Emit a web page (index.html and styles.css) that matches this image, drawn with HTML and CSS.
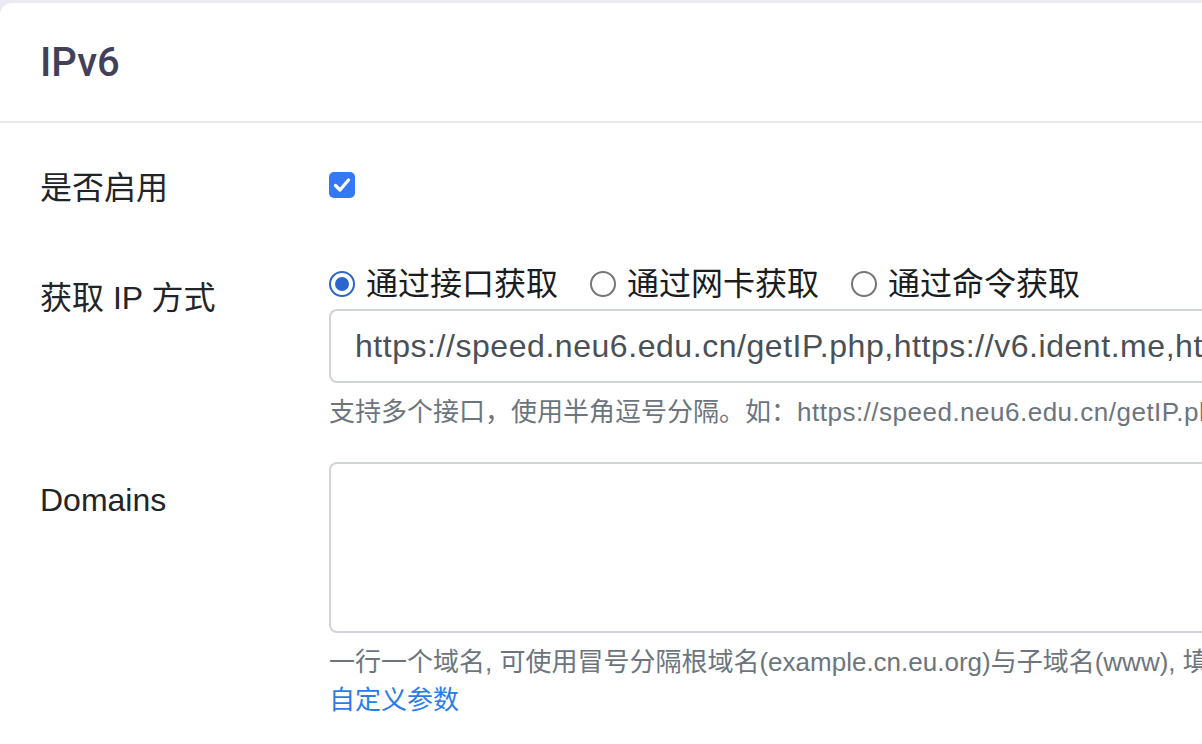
FILE: index.html
```html
<!DOCTYPE html>
<html lang="zh-CN">
<head>
<meta charset="utf-8">
<title>IPv6</title>
<link rel="stylesheet" href="styles.css">
</head>
<body>
<div class="page">
  <div class="card">
    <div class="card-header">IPv6</div>
    <div class="card-body">
      <div class="form-row row-enable">
        <div class="label">是否启用</div>
        <div class="control control-check">
          <span class="checkbox">
            <svg viewBox="0 0 26 26" width="26" height="26"><path d="M6.5 13.5 L11 18 L19.5 8" fill="none" stroke="#fff" stroke-width="3.2" stroke-linecap="round" stroke-linejoin="round"/></svg>
          </span>
        </div>
      </div>
      <div class="form-row row-ip">
        <div class="label label-pad">获取 IP 方式</div>
        <div class="control">
          <div class="radios">
            <label class="radio-opt"><span class="radio checked"></span><span class="radio-text">通过接口获取</span></label>
            <label class="radio-opt"><span class="radio"></span><span class="radio-text">通过网卡获取</span></label>
            <label class="radio-opt"><span class="radio"></span><span class="radio-text">通过命令获取</span></label>
          </div>
          <div class="input">https://speed.neu6.edu.cn/getIP.php,https://v6.ident.me,https://6.ipw.cn</div>
          <div class="form-text">支持多个接口，使用半角逗号分隔。如：<span class="latin">https://speed.neu6.edu.cn/getIP.php,https://v6.ident.me</span></div>
        </div>
      </div>
      <div class="form-row row-domains">
        <div class="label label-pad">Domains</div>
        <div class="control">
          <div class="textarea"></div>
          <div class="form-text">一行一个域名, 可使用冒号分隔根域名(example.cn.eu.org)与子域名(www), 填写示例</div>
          <a class="link">自定义参数</a>
        </div>
      </div>
    </div>
  </div>
</div>
</body>
</html>
```
FILE: styles.css
```css
html, body {
  margin: 0;
  padding: 0;
  overflow: hidden;
  background: #ecebf1;
}
body {
  font-family: "Liberation Sans", "Noto Sans CJK SC", sans-serif;
  color: #212529;
}
.page {
  padding-top: 3px;
  width: 1500px;
}
.card {
  background: #fff;
  border-top-left-radius: 12px;
  height: 800px;
}
.card-header {
  height: 120px;
  box-sizing: border-box;
  padding: 36px 40px;
  font-family: Roboto, "Liberation Sans", sans-serif;
  font-size: 40px;
  line-height: 48px;
  font-weight: 500;
  color: #43415a;
  border-bottom: 2px solid #e9e8ee;
}
.card-body {
  padding: 27px 0 0 40px;
}
.form-row {
  display: grid;
  grid-template-columns: 289px 1fr;
}
.row-enable { margin-bottom: 34px; }
.row-ip { margin-bottom: 31px; }
.label {
  font-size: 32px;
  line-height: 48px;
  padding-top: 14px;
  padding-bottom: 14px;
  color: #212529;
}
.control-check {
  padding-top: 22px;
}
.checkbox {
  display: flex;
  align-items: center;
  justify-content: center;
  width: 26px;
  height: 26px;
  border-radius: 5px;
  background: #3478f6;
}
.radios {
  display: flex;
  align-items: center;
  height: 48px;
  gap: 32px;
}
.radio-opt {
  display: flex;
  align-items: center;
  gap: 11px;
}
.radio {
  width: 26px;
  height: 26px;
  box-sizing: border-box;
  border-radius: 50%;
  border: 2px solid #767676;
  position: relative;
}
.radio.checked {
  border: 2.5px solid #2a66cc;
}
.radio.checked::after {
  content: "";
  position: absolute;
  left: 3.5px;
  top: 3.5px;
  width: 14px;
  height: 14px;
  border-radius: 50%;
  background: #2a66cc;
}
.radio-text {
  font-size: 32px;
  line-height: 48px;
  color: #1a1c1f;
}
.input {
  margin-top: 1px;
  height: 74px;
  box-sizing: border-box;
  border: 2px solid #d0d4d9;
  border-right: none;
  border-radius: 8px 0 0 8px;
  padding: 0 0 0 24px;
  font-size: 32px;
  line-height: 70px;
  letter-spacing: 0.55px;
  color: #495057;
  white-space: nowrap;
  overflow: hidden;
}
.textarea {
  height: 171px;
  box-sizing: border-box;
  border: 2px solid #d0d4d9;
  border-right: none;
  border-radius: 8px 0 0 8px;
}
.form-text {
  margin-top: 10px;
  font-size: 26px;
  line-height: 38px;
  color: #6c757d;
  white-space: nowrap;
  overflow: hidden;
}
.form-text .latin {
  letter-spacing: 0.5px;
}
.link {
  display: block;
  font-size: 26px;
  line-height: 38px;
  color: #2a7de9;
  text-decoration: none;
}
```
